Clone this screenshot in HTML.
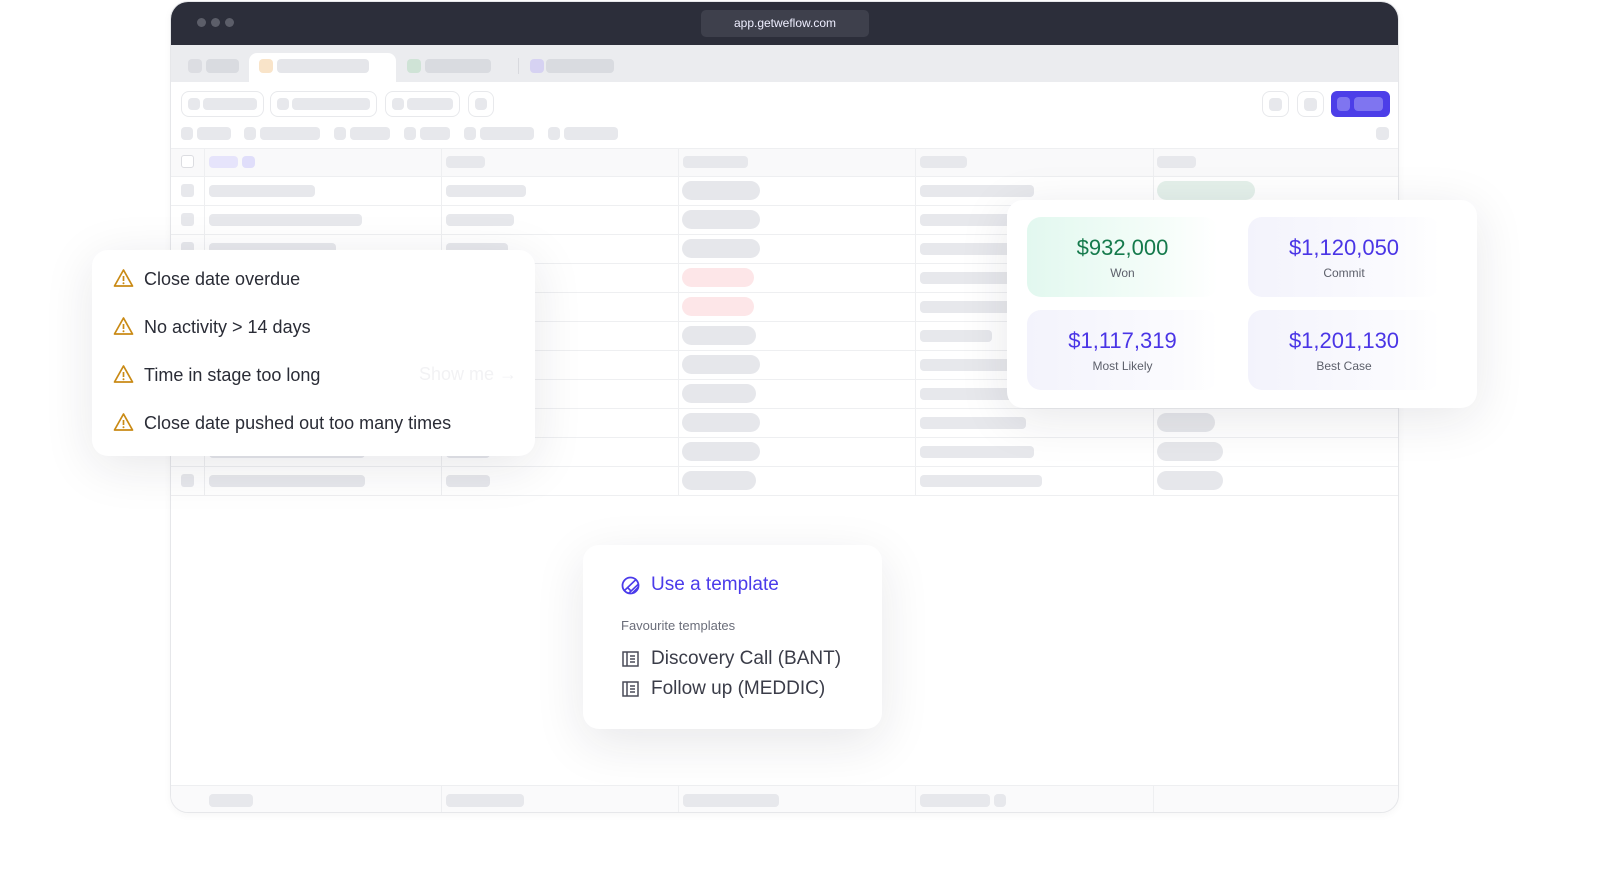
<!DOCTYPE html>
<html><head><meta charset="utf-8"><style>
*{margin:0;padding:0;box-sizing:border-box}
body{width:1600px;height:877px;background:#fff;position:relative;overflow:hidden;font-family:"Liberation Sans",Arial,sans-serif}
.a{position:absolute}
.b{position:absolute;background:#e7e8ec;border-radius:4px;height:12px}
.p{position:absolute;background:#e6e7eb;border-radius:10px;height:19px}
.hl{position:absolute;left:0;right:0;height:1px;background:#eeeff1}
.vl{position:absolute;top:146px;width:1px;height:348px;background:#eeeff1}
.cb{position:absolute;left:10px;width:13px;height:13px;border-radius:3px;background:#e7e8ec}
.btn{position:absolute;border:1px solid #e8e9ec;border-radius:8px;height:26px;background:#fff}
</style></head><body>
<!-- browser window -->
<div class="a" style="left:170px;top:1px;width:1229px;height:812px;border-radius:18px;border:1px solid #e6e7ea;background:#fff;overflow:hidden;box-shadow:0 2px 8px rgba(0,0,0,.04)">
  <div class="a" style="left:0;top:0;width:100%;height:43px;background:#2c2e3a"></div>
  <div class="a" style="left:26px;top:16px;width:9px;height:9px;border-radius:50%;background:#5c5e69"></div>
  <div class="a" style="left:40px;top:16px;width:9px;height:9px;border-radius:50%;background:#5c5e69"></div>
  <div class="a" style="left:54px;top:16px;width:9px;height:9px;border-radius:50%;background:#5c5e69"></div>
  <div class="a" style="left:530px;top:8px;width:168px;height:27px;border-radius:5px;background:#3e404c;color:#eef;font-size:12px;line-height:27px;text-align:center">app.getweflow.com</div>
  <!-- tab bar -->
  <div class="a" style="left:0;top:43px;width:100%;height:37px;background:#ebecef"></div>
  <div class="b" style="left:17px;top:57px;width:14px;height:14px;background:#dcdde2"></div>
  <div class="b" style="left:35px;top:57px;width:33px;height:14px;background:#d9dbe0"></div>
  <div class="a" style="left:78px;top:51px;width:147px;height:30px;background:#fff;border-radius:8px 8px 0 0"></div>
  <div class="b" style="left:88px;top:57px;width:14px;height:14px;background:#f9e4c9"></div>
  <div class="b" style="left:106px;top:57px;width:92px;height:14px;background:#e5e6ea"></div>
  <div class="b" style="left:236px;top:57px;width:14px;height:14px;background:#cfe3d6"></div>
  <div class="b" style="left:254px;top:57px;width:66px;height:14px;background:#d9dbe0"></div>
  <div class="a" style="left:347px;top:56px;width:1px;height:16px;background:#d8d9de"></div>
  <div class="b" style="left:359px;top:57px;width:14px;height:14px;background:#d6d2f2"></div>
  <div class="b" style="left:375px;top:57px;width:68px;height:14px;background:#d9dbe0"></div>
  <!-- toolbar -->
  <div class="btn" style="left:10px;top:89px;width:83px"></div><div class="b" style="left:17px;top:96px;width:12px;height:12px"></div><div class="b" style="left:32px;top:96px;width:54px;height:12px"></div>
  <div class="btn" style="left:99px;top:89px;width:107px"></div><div class="b" style="left:106px;top:96px;width:12px;height:12px"></div><div class="b" style="left:121px;top:96px;width:78px;height:12px"></div>
  <div class="btn" style="left:214px;top:89px;width:75px"></div><div class="b" style="left:221px;top:96px;width:12px;height:12px"></div><div class="b" style="left:236px;top:96px;width:46px;height:12px"></div>
  <div class="btn" style="left:297px;top:89px;width:26px"></div><div class="b" style="left:304px;top:96px;width:12px;height:12px"></div>
  <div class="btn" style="left:1091px;top:89px;width:27px"></div><div class="b" style="left:1098px;top:96px;width:13px;height:13px"></div>
  <div class="btn" style="left:1126px;top:89px;width:27px"></div><div class="b" style="left:1133px;top:96px;width:13px;height:13px"></div>
  <div class="a" style="left:1160px;top:89px;width:59px;height:26px;border-radius:6px;background:#4c3ee8"></div>
  <div class="b" style="left:1166px;top:95px;width:13px;height:14px;background:#7f75f0"></div>
  <div class="b" style="left:1183px;top:95px;width:29px;height:14px;background:#7f75f0"></div>
  <div class="b" style="left:10px;top:125px;width:12px;height:13px"></div><div class="b" style="left:26px;top:125px;width:34px;height:13px"></div>
  <div class="b" style="left:73px;top:125px;width:12px;height:13px"></div><div class="b" style="left:89px;top:125px;width:60px;height:13px"></div>
  <div class="b" style="left:163px;top:125px;width:12px;height:13px"></div><div class="b" style="left:179px;top:125px;width:40px;height:13px"></div>
  <div class="b" style="left:233px;top:125px;width:12px;height:13px"></div><div class="b" style="left:249px;top:125px;width:30px;height:13px"></div>
  <div class="b" style="left:293px;top:125px;width:12px;height:13px"></div><div class="b" style="left:309px;top:125px;width:54px;height:13px"></div>
  <div class="b" style="left:377px;top:125px;width:12px;height:13px"></div><div class="b" style="left:393px;top:125px;width:54px;height:13px"></div>
  <div class="b" style="left:1205px;top:125px;width:13px;height:13px"></div>
  <!-- table -->
  <div class="a" style="left:0;top:146px;width:100%;height:28px;background:#f9f9fa"></div>
  <div class="hl" style="top:146px"></div>
  <div class="hl" style="top:174px"></div><div class="hl" style="top:203px"></div><div class="hl" style="top:232px"></div><div class="hl" style="top:261px"></div><div class="hl" style="top:290px"></div><div class="hl" style="top:319px"></div><div class="hl" style="top:348px"></div><div class="hl" style="top:377px"></div><div class="hl" style="top:406px"></div><div class="hl" style="top:435px"></div><div class="hl" style="top:464px"></div><div class="hl" style="top:493px"></div>
  <div class="vl" style="left:33px"></div><div class="vl" style="left:270px"></div><div class="vl" style="left:507px"></div><div class="vl" style="left:744px"></div><div class="vl" style="left:982px"></div>
  <div class="a" style="left:10px;top:153px;width:13px;height:13px;border:1px solid #dcdde1;border-radius:3px;background:#fff"></div>
  <div class="b" style="left:38px;top:154px;width:29px;background:#e6e4fb"></div><div class="b" style="left:71px;top:154px;width:13px;background:#e0defa"></div>
  <div class="b" style="left:275px;top:154px;width:39px"></div><div class="b" style="left:512px;top:154px;width:65px"></div><div class="b" style="left:749px;top:154px;width:47px"></div><div class="b" style="left:986px;top:154px;width:39px"></div>
  <!-- rows -->
  <div class="cb" style="top:182px"></div><div class="b" style="left:38px;top:183px;width:106px"></div><div class="b" style="left:275px;top:183px;width:80px"></div><div class="p" style="left:511px;top:179px;width:78px"></div><div class="b" style="left:749px;top:183px;width:114px"></div><div class="p" style="left:986px;top:179px;width:98px;background:#e4f0ea"></div>
  <div class="cb" style="top:211px"></div><div class="b" style="left:38px;top:212px;width:153px"></div><div class="b" style="left:275px;top:212px;width:68px"></div><div class="p" style="left:511px;top:208px;width:78px"></div><div class="b" style="left:749px;top:212px;width:100px"></div>
  <div class="cb" style="top:240px"></div><div class="b" style="left:38px;top:241px;width:127px"></div><div class="b" style="left:275px;top:241px;width:62px"></div><div class="p" style="left:511px;top:237px;width:78px"></div><div class="b" style="left:749px;top:241px;width:100px"></div>
  <div class="p" style="left:511px;top:266px;width:72px;background:#fde6e8"></div><div class="b" style="left:749px;top:270px;width:100px"></div>
  <div class="p" style="left:511px;top:295px;width:72px;background:#fde6e8"></div><div class="b" style="left:749px;top:299px;width:100px"></div>
  <div class="p" style="left:511px;top:324px;width:74px"></div><div class="b" style="left:749px;top:328px;width:72px"></div>
  <div class="p" style="left:511px;top:353px;width:78px"></div><div class="b" style="left:749px;top:357px;width:100px"></div>
  <div class="p" style="left:511px;top:382px;width:74px"></div><div class="b" style="left:749px;top:386px;width:100px"></div>
  <div class="p" style="left:511px;top:411px;width:78px"></div><div class="b" style="left:749px;top:415px;width:106px"></div><div class="p" style="left:986px;top:411px;width:58px"></div>
  <div class="b" style="left:38px;top:444px;width:156px"></div><div class="b" style="left:275px;top:444px;width:44px"></div><div class="p" style="left:511px;top:440px;width:78px"></div><div class="b" style="left:749px;top:444px;width:114px"></div><div class="p" style="left:986px;top:440px;width:66px"></div>
  <div class="cb" style="top:472px"></div><div class="b" style="left:38px;top:473px;width:156px"></div><div class="b" style="left:275px;top:473px;width:44px"></div><div class="p" style="left:511px;top:469px;width:74px"></div><div class="b" style="left:749px;top:473px;width:122px"></div><div class="p" style="left:986px;top:469px;width:66px"></div>
  <!-- footer -->
  <div class="a" style="left:0;top:783px;width:100%;height:30px;background:#fafafb;border-top:1px solid #eeeff1"></div>
  <div class="a" style="left:270px;top:784px;width:1px;height:30px;background:#eeeff1"></div><div class="a" style="left:507px;top:784px;width:1px;height:30px;background:#eeeff1"></div><div class="a" style="left:744px;top:784px;width:1px;height:30px;background:#eeeff1"></div><div class="a" style="left:982px;top:784px;width:1px;height:30px;background:#eeeff1"></div>
  <div class="b" style="left:38px;top:792px;width:44px;height:13px"></div><div class="b" style="left:275px;top:792px;width:78px;height:13px"></div><div class="b" style="left:512px;top:792px;width:96px;height:13px"></div><div class="b" style="left:749px;top:792px;width:70px;height:13px"></div><div class="b" style="left:823px;top:792px;width:12px;height:13px"></div>
</div>

<!-- warning card -->
<div class="a" style="left:92px;top:250px;width:443px;height:206px;background:#fff;border-radius:16px;box-shadow:0 10px 50px rgba(30,30,50,.10)">
  <div class="a" style="left:327px;top:114px;color:#f2f2f4;font-size:18px">Show me →</div>
</div>
<div class="a" style="left:113px;top:268px;font-size:18px;color:#2a2c36;line-height:22px">
  <div style="height:48px;display:flex;gap:10px"><svg width="21" height="20" viewBox="0 0 21 20"><path d="M10.5 2 L19.5 18 H1.5 Z" fill="none" stroke="#c98a15" stroke-width="1.7" stroke-linejoin="round"/><path d="M10.5 8v5" stroke="#c98a15" stroke-width="1.7"/><circle cx="10.5" cy="15.3" r="1" fill="#c98a15"/></svg>Close date overdue</div>
  <div style="height:48px;display:flex;gap:10px"><svg width="21" height="20" viewBox="0 0 21 20"><path d="M10.5 2 L19.5 18 H1.5 Z" fill="none" stroke="#c98a15" stroke-width="1.7" stroke-linejoin="round"/><path d="M10.5 8v5" stroke="#c98a15" stroke-width="1.7"/><circle cx="10.5" cy="15.3" r="1" fill="#c98a15"/></svg>No activity &gt; 14 days</div>
  <div style="height:48px;display:flex;gap:10px"><svg width="21" height="20" viewBox="0 0 21 20"><path d="M10.5 2 L19.5 18 H1.5 Z" fill="none" stroke="#c98a15" stroke-width="1.7" stroke-linejoin="round"/><path d="M10.5 8v5" stroke="#c98a15" stroke-width="1.7"/><circle cx="10.5" cy="15.3" r="1" fill="#c98a15"/></svg>Time in stage too long</div>
  <div style="height:48px;display:flex;gap:10px"><svg width="21" height="20" viewBox="0 0 21 20"><path d="M10.5 2 L19.5 18 H1.5 Z" fill="none" stroke="#c98a15" stroke-width="1.7" stroke-linejoin="round"/><path d="M10.5 8v5" stroke="#c98a15" stroke-width="1.7"/><circle cx="10.5" cy="15.3" r="1" fill="#c98a15"/></svg>Close date pushed out too many times</div>
</div>

<!-- stats card -->
<div class="a" style="left:1007px;top:200px;width:470px;height:208px;background:#fff;border-radius:16px;box-shadow:0 10px 50px rgba(30,30,50,.10)"></div>
<div class="a" style="left:1027px;top:217px;width:191px;height:80px;border-radius:14px;background:linear-gradient(90deg,#e2f8ef,#f5fdf9 70%,#fff);text-align:center">
  <div style="margin-top:18px;font-size:22px;color:#157a4c">$932,000</div><div style="margin-top:5px;font-size:12px;color:#5d606b">Won</div></div>
<div class="a" style="left:1248px;top:217px;width:192px;height:80px;border-radius:14px;background:linear-gradient(90deg,#f3f3fc,#fbfbfe 80%,#fff);text-align:center">
  <div style="margin-top:18px;font-size:22px;color:#4a35e6">$1,120,050</div><div style="margin-top:5px;font-size:12px;color:#5d606b">Commit</div></div>
<div class="a" style="left:1027px;top:310px;width:191px;height:80px;border-radius:14px;background:linear-gradient(90deg,#f3f3fc,#fbfbfe 80%,#fff);text-align:center">
  <div style="margin-top:18px;font-size:22px;color:#4a35e6">$1,117,319</div><div style="margin-top:5px;font-size:12px;color:#5d606b">Most Likely</div></div>
<div class="a" style="left:1248px;top:310px;width:192px;height:80px;border-radius:14px;background:linear-gradient(90deg,#f3f3fc,#fbfbfe 80%,#fff);text-align:center">
  <div style="margin-top:18px;font-size:22px;color:#4a35e6">$1,201,130</div><div style="margin-top:5px;font-size:12px;color:#5d606b">Best Case</div></div>

<!-- template card -->
<div class="a" style="left:583px;top:545px;width:299px;height:184px;background:#fff;border-radius:16px;box-shadow:0 14px 50px rgba(30,30,50,.10)">
  <svg class="a" style="left:38px;top:31px" width="19" height="19" viewBox="0 0 19 19"><circle cx="9.5" cy="9.5" r="8" fill="none" stroke="#4b3bea" stroke-width="1.8"/><path d="M3.5 14.5 L14.5 4 M8 17 L17 8.5 M11.5 17 L17 11.5 M6 11 L10 15" stroke="#4b3bea" stroke-width="1.6" fill="none"/></svg>
  <div class="a" style="left:68px;top:29px;font-size:19px;color:#4b3bea">Use a template</div>
  <div class="a" style="left:38px;top:73px;font-size:13px;color:#6b6e7a">Favourite templates</div>
  <svg class="a" style="left:39px;top:106px" width="17" height="16" viewBox="0 0 17 16"><rect x="1" y="1" width="15" height="14" fill="none" stroke="#4a4c58" stroke-width="1.5"/><path d="M5 1v14M8 5h5M8 8h5M8 11h5" stroke="#4a4c58" stroke-width="1.5"/></svg>
  <div class="a" style="left:68px;top:103px;font-size:19px;color:#3a3c48">Discovery Call (BANT)</div>
  <svg class="a" style="left:39px;top:136px" width="17" height="16" viewBox="0 0 17 16"><rect x="1" y="1" width="15" height="14" fill="none" stroke="#4a4c58" stroke-width="1.5"/><path d="M5 1v14M8 5h5M8 8h5M8 11h5" stroke="#4a4c58" stroke-width="1.5"/></svg>
  <div class="a" style="left:68px;top:133px;font-size:19px;color:#3a3c48">Follow up (MEDDIC)</div>
</div>
</body></html>
